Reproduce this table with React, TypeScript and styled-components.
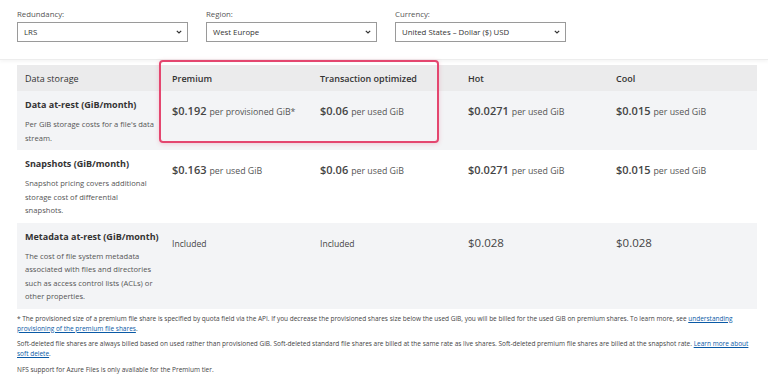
import * as React from 'react';
import styled, { createGlobalStyle } from 'styled-components';

const GlobalStyle = createGlobalStyle`
  html, body {
    margin: 0;
    padding: 0;
    background: #fff;
  }
  body {
    font-family: "Open Sans", "Noto Sans", "Liberation Sans", sans-serif;
    color: #333;
  }
`;

interface Price {
  amount: string;
  unit?: string;
  plain?: boolean;
}

interface Row {
  title: string;
  desc: string;
  prices: Price[];
}

const rows: Row[] = [
  {
    title: 'Data at-rest (GiB/month)',
    desc: "Per GiB storage costs for a file's data stream.",
    prices: [
      { amount: '$0.192', unit: 'per provisioned GiB*' },
      { amount: '$0.06', unit: 'per used GiB' },
      { amount: '$0.0271', unit: 'per used GiB' },
      { amount: '$0.015', unit: 'per used GiB' },
    ],
  },
  {
    title: 'Snapshots (GiB/month)',
    desc: 'Snapshot pricing covers additional storage cost of differential snapshots.',
    prices: [
      { amount: '$0.163', unit: 'per used GiB' },
      { amount: '$0.06', unit: 'per used GiB' },
      { amount: '$0.0271', unit: 'per used GiB' },
      { amount: '$0.015', unit: 'per used GiB' },
    ],
  },
  {
    title: 'Metadata at-rest (GiB/month)',
    desc: 'The cost of file system metadata associated with files and directories such as access control lists (ACLs) or other properties.',
    prices: [
      { amount: 'Included', plain: true },
      { amount: 'Included', plain: true },
      { amount: '$0.028' },
      { amount: '$0.028' },
    ],
  },
];

const Page = styled.div`
  width: 768px;
  height: 388px;
  overflow: hidden;
`;

const FilterBar = styled.div`
  display: flex;
  gap: 18px;
  padding: 8px 17px 0;
  height: 60px;
  box-sizing: border-box;
  border-bottom: 1px solid #ededed;
  box-shadow: 0 2px 3px rgba(0, 0, 0, 0.04);
`;

const Field = styled.div`
  display: flex;
  flex-direction: column;
  gap: 2px;
  width: 171px;
`;

const Label = styled.label`
  font-size: 7.8px;
  line-height: 12px;
  color: #555;
`;

const Select = styled.div`
  display: flex;
  align-items: center;
  justify-content: space-between;
  height: 20px;
  box-sizing: border-box;
  border: 1px solid #9a9a9a;
  padding: 0 5px 0 6px;
  font-size: 7.8px;
  color: #333;
  background: #fff;
`;

const Chevron = () => (
  <svg width="6" height="4" viewBox="0 0 6 4">
    <path d="M0.8 0.8 L3 3 L5.2 0.8" fill="none" stroke="#333" strokeWidth="1.2" />
  </svg>
);

const TableWrap = styled.div`
  position: relative;
  margin: 5px 0 0 17px;
  width: 740px;
`;

const Grid = styled.div`
  display: grid;
  grid-template-columns: repeat(5, 148px);
`;

const HeadCell = styled.div<{ $first?: boolean }>`
  background: #ebebec;
  height: 26px;
  display: flex;
  align-items: center;
  padding-left: ${p => (p.$first ? '8px' : '7px')};
  font-size: 9px;
  font-weight: ${p => (p.$first ? 400 : 600)};
  color: #333;
`;

const Cell = styled.div<{ $shade: boolean }>`
  background: ${p => (p.$shade ? '#f3f4f6' : '#fff')};
  padding: 7px 4px 5px 7px;
`;

const TitleCell = styled(Cell)`
  padding-left: 8px;
`;

const RowTitle = styled.div`
  font-size: 9px;
  font-weight: 700;
  line-height: 14px;
  color: #333;
  white-space: nowrap;
`;

const RowDesc = styled.div`
  margin-top: 6px;
  font-size: 7.6px;
  line-height: 13.5px;
  color: #555;
  padding-right: 6px;
`;

const Amount = styled.span<{ $plain?: boolean; $bold?: boolean }>`
  font-size: ${p => (p.$plain ? '8.6px' : p.$bold ? '11px' : '11.5px')};
  font-weight: ${p => (p.$bold ? 600 : 400)};
  color: #444;
  line-height: 15px;
`;

const Unit = styled.span`
  font-size: 8.8px;
  color: #555;
  margin-left: 3px;
`;

const Highlight = styled.div`
  position: absolute;
  left: 142px;
  top: -5px;
  width: 280px;
  height: 83px;
  box-sizing: border-box;
  border: 2px solid #e4466f;
  border-radius: 4px;
  box-shadow: 0 1px 4px rgba(228, 70, 111, 0.25);
  pointer-events: none;
`;

const Notes = styled.div`
  margin: 5px 8px 0 17px;
  font-size: 6.5px;
  line-height: 10px;
  color: #444;

  p {
    margin: 0 0 5.5px;
  }

  a {
    color: #0a5aa6;
    text-decoration: underline;
  }
`;

export default function App(): JSX.Element {
  return (
    <Page>
      <GlobalStyle />
      <FilterBar>
        <Field>
          <Label>Redundancy:</Label>
          <Select>LRS<Chevron /></Select>
        </Field>
        <Field>
          <Label>Region:</Label>
          <Select>West Europe<Chevron /></Select>
        </Field>
        <Field>
          <Label>Currency:</Label>
          <Select>United States – Dollar ($) USD<Chevron /></Select>
        </Field>
      </FilterBar>
      <TableWrap>
        <Grid>
          <HeadCell $first>Data storage</HeadCell>
          <HeadCell>Premium</HeadCell>
          <HeadCell>Transaction optimized</HeadCell>
          <HeadCell>Hot</HeadCell>
          <HeadCell>Cool</HeadCell>
          {rows.map((row, i) => (
            <React.Fragment key={row.title}>
              <TitleCell $shade={i % 2 === 0}>
                <RowTitle>{row.title}</RowTitle>
                <RowDesc>{row.desc}</RowDesc>
              </TitleCell>
              {row.prices.map((price, j) => (
                <Cell key={j} $shade={i % 2 === 0}>
                  <Amount $plain={price.plain} $bold={!!price.unit}>{price.amount}</Amount>
                  {price.unit && <Unit>{price.unit}</Unit>}
                </Cell>
              ))}
            </React.Fragment>
          ))}
        </Grid>
        <Highlight />
      </TableWrap>
      <Notes>
        <p>
          * The provisioned size of a premium file share is specified by quota field via the API. If you decrease the provisioned shares size below the used GiB, you will be billed for the used GiB on premium shares. To learn more, see <a>understanding provisioning of the premium file shares</a>.
        </p>
        <p>
          Soft-deleted file shares are always billed based on used rather than provisioned GiB. Soft-deleted standard file shares are billed at the same rate as live shares. Soft-deleted premium file shares are billed at the snapshot rate. <a>Learn more about soft delete</a>.
        </p>
        <p>NFS support for Azure Files is only available for the Premium tier.</p>
      </Notes>
    </Page>
  );
}
